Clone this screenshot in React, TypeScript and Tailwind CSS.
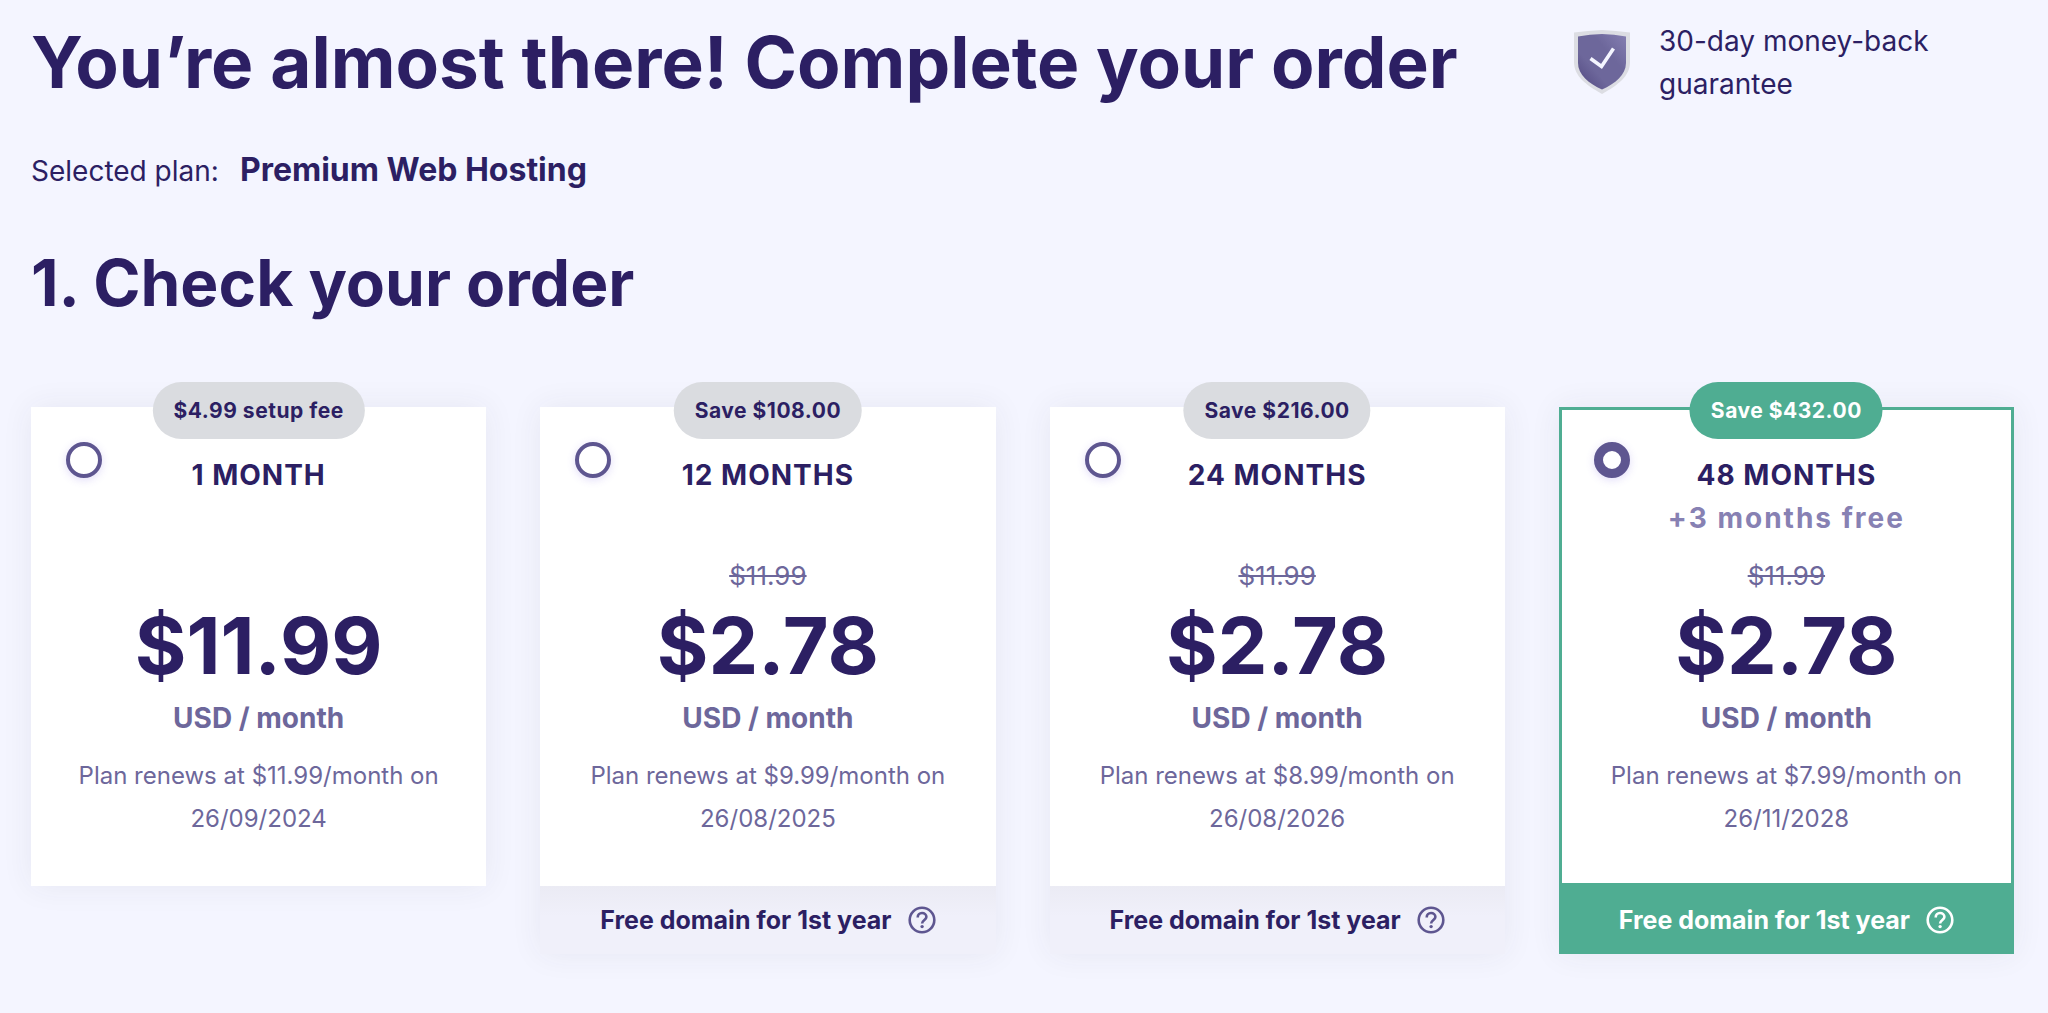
import { useState } from "react";
import { clsx } from "clsx";

type Plan = {
  id: string;
  badge: string;
  title: string;
  bonus?: string;
  oldPrice?: string;
  price: string;
  renewPrice: string;
  renewDate: string;
  freeDomain: boolean;
};

const plans: Plan[] = [
  {
    id: "1m",
    badge: "$4.99 setup fee",
    title: "1 MONTH",
    price: "$11.99",
    renewPrice: "$11.99",
    renewDate: "26/09/2024",
    freeDomain: false,
  },
  {
    id: "12m",
    badge: "Save $108.00",
    title: "12 MONTHS",
    oldPrice: "$11.99",
    price: "$2.78",
    renewPrice: "$9.99",
    renewDate: "26/08/2025",
    freeDomain: true,
  },
  {
    id: "24m",
    badge: "Save $216.00",
    title: "24 MONTHS",
    oldPrice: "$11.99",
    price: "$2.78",
    renewPrice: "$8.99",
    renewDate: "26/08/2026",
    freeDomain: true,
  },
  {
    id: "48m",
    badge: "Save $432.00",
    title: "48 MONTHS",
    bonus: "+3 months free",
    oldPrice: "$11.99",
    price: "$2.78",
    renewPrice: "$7.99",
    renewDate: "26/11/2028",
    freeDomain: true,
  },
];

function ShieldIcon() {
  return (
    <svg viewBox="0 0 58 66" className="mt-[9px] h-[66px] w-[58px] shrink-0" aria-hidden="true">
      <defs>
        <linearGradient id="shield" x1="1" y1="0" x2="0" y2="1">
          <stop offset="0" stopColor="#857fb2" />
          <stop offset="0.35" stopColor="#6d679b" />
          <stop offset="0.65" stopColor="#6d679b" />
          <stop offset="1" stopColor="#50467f" />
        </linearGradient>
      </defs>
      <path
        d="M1 3.5 Q15 1.5 29 1 Q43 1.5 57 3.5 V33 C57 47 45 56 29 65 C13 56 1 47 1 33 Z"
        fill="#dcdde3"
      />
      <path
        d="M5 7.5 Q17 5 29 5 Q41 5 53 7.5 V34 C53 46 42 54.5 29 60.5 C16 54.5 5 46 5 34 Z"
        fill="url(#shield)"
      />
      <path d="M17.5 29.5 L28.5 37.5 L40.5 19.5" fill="none" stroke="#f4f5ff" strokeWidth="3.6" />
    </svg>
  );
}

function HelpIcon() {
  return (
    <svg viewBox="0 0 28 28" className="size-7" fill="none" aria-hidden="true">
      <circle cx="14" cy="14" r="12.3" stroke="currentColor" strokeWidth="2.6" />
      <path
        d="M9.7 11.4 C9.7 8.7 11.6 7 14 7 C16.5 7 18.4 8.7 18.4 11 C18.4 13.9 14.1 14.1 14.1 17.5"
        stroke="currentColor"
        strokeWidth="2.6"
      />
      <circle cx="14.1" cy="20.6" r="1.7" fill="currentColor" />
    </svg>
  );
}

function PlanCard({
  plan,
  selected,
  onSelect,
}: {
  plan: Plan;
  selected: boolean;
  onSelect: () => void;
}) {
  return (
    <div className="relative self-start shadow-[0_0_30px_rgba(54,52,77,0.07)]">
      <div
        className={clsx(
          "border-[3px] bg-white px-8 pt-11 pb-[43px] text-center",
          selected ? "border-[#4fad92]" : "border-white"
        )}
      >
        <input
          type="radio"
          name="period"
          id={plan.id}
          checked={selected}
          onChange={onSelect}
          className={clsx(
            "absolute top-[35px] left-[35px] size-9 appearance-none rounded-full border-[#5e5690] bg-white shadow-[0_2px_8px_rgba(103,80,220,0.2)]",
            selected ? "border-[9px]" : "border-4"
          )}
        />
        <label
          htmlFor={plan.id}
          className="block text-[28px] leading-[43px] font-bold tracking-[1px]"
        >
          {plan.title}
        </label>
        <p className="h-[43px] text-[28px] leading-[43px] font-bold tracking-[2px] text-[#8781b3]">
          {plan.bonus}
        </p>
        <p className="mt-[14px] h-[43px] text-[26px] leading-[43px] text-[#6d679b]">
          {plan.oldPrice && <del>{plan.oldPrice}</del>}
        </p>
        <p className="mt-1 text-[79px] leading-[88px] font-bold">{plan.price}</p>
        <p className="mt-2 text-[28px] leading-[43px] font-bold text-[#6d679b]">USD / month</p>
        <p className="mt-[14px] text-[24px] leading-[43px] text-[#6d679b]">
          Plan renews at {plan.renewPrice}/month on {plan.renewDate}
        </p>
      </div>

      {plan.freeDomain && (
        <div
          className={clsx(
            "flex h-[68px] items-center justify-center gap-4",
            selected
              ? "bg-[#4fad92] text-white"
              : "bg-linear-to-b from-[#ebebf4] to-[#f0f0fa] to-45%"
          )}
        >
          <span className="text-[25px] leading-[43px] font-bold">Free domain for 1st year</span>
          <button
            type="button"
            aria-label="About the free domain"
            className={selected ? "text-white" : "text-[#5e5690]"}
          >
            <HelpIcon />
          </button>
        </div>
      )}

      <span
        className={clsx(
          "absolute -top-[25px] left-1/2 -translate-x-1/2 rounded-full px-[21px] text-[21px] leading-[57px] font-bold tracking-wide whitespace-nowrap",
          selected ? "bg-[#4fad92] text-white" : "bg-[#dadce0]"
        )}
      >
        {plan.badge}
      </span>
    </div>
  );
}

export default function App() {
  const [selected, setSelected] = useState("48m");

  return (
    <main className="min-h-screen bg-[#f4f5ff] pt-5 pr-[34px] pb-[60px] pl-[31px] font-['Inter','Open_Sans',sans-serif] text-[#2c1f63]">
      <header className="flex flex-wrap justify-between gap-y-6 xl:flex-nowrap">
        <h1 className="text-[71px] leading-[84px] font-bold">
          You’re almost there! Complete your order
        </h1>
        <div className="flex w-[441px] shrink-0 gap-7">
          <ShieldIcon />
          <p className="text-[28px] leading-[43px]">30-day money-back guarantee</p>
        </div>
      </header>

      <p className="mt-[42px] flex flex-wrap items-baseline gap-x-[21px] text-[28px] leading-[43px]">
        Selected plan: <strong className="text-[32px] font-bold">Premium Web Hosting</strong>
      </p>

      <h2 className="mt-12 text-[64px] leading-[84px] font-bold">1. Check your order</h2>

      <div className="mt-[82px] grid grid-cols-1 gap-x-[54px] gap-y-16 md:grid-cols-2 xl:grid-cols-4">
        {plans.map((plan) => (
          <PlanCard
            key={plan.id}
            plan={plan}
            selected={plan.id === selected}
            onSelect={() => setSelected(plan.id)}
          />
        ))}
      </div>
    </main>
  );
}
